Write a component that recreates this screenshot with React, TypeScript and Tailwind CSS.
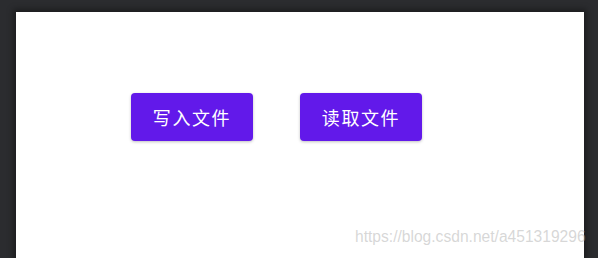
import React from 'react';

function PurpleButton({ label }: { label: string }) {
  return (
    <button
      type="button"
      className="flex h-12 w-[122px] items-center justify-center rounded-[4px] bg-[#6219ea] text-[18px] tracking-[1.6px] text-white shadow-[0_1px_3px_rgba(0,0,0,0.25)]"
      style={{ fontFamily: '"Noto Sans CJK SC", "Noto Sans", sans-serif' }}>
      {label}
    </button>
  );
}

export default function App() {
  return (
    <div className="relative h-[258px] w-[598px] overflow-hidden bg-[#2b2c2f] pl-4 pr-[14px] pt-3">
      <div className="h-full w-full bg-white pl-[115px] pt-[81px] shadow-[0_0_6px_3px_rgba(0,0,0,0.35)]">
        <div className="flex gap-[47px]">
          <PurpleButton label="写入文件" />
          <PurpleButton label="读取文件" />
        </div>
      </div>
      <div
        className="absolute left-[355px] top-[227px] text-[15.6px] leading-[20px] text-[rgba(175,175,175,0.5)]"
        style={{ fontFamily: '"Liberation Sans", Arial, sans-serif' }}>
        https://blog.csdn.net/a451319296
      </div>
    </div>
  );
}
